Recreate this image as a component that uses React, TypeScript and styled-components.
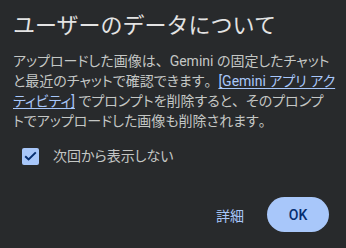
import React from "react";
import styled, { createGlobalStyle } from "styled-components";

const Global = createGlobalStyle`
  html, body { margin: 0; padding: 0; background: #282a2c; }
  body { width: 346px; height: 248px; overflow: hidden; }
`;

const font = `Roboto, "Noto Sans CJK JP", "Noto Sans", sans-serif`;

const Dialog = styled.div`
  box-sizing: border-box;
  width: 346px;
  height: 248px;
  background: #282a2c;
  padding: 12px 17px 0 13px;
  font-family: ${font};
  font-feature-settings: "palt";
  display: flex;
  flex-direction: column;
`;

const Title = styled.h1`
  margin: 0;
  font-size: 22px;
  font-weight: 400;
  line-height: 28px;
  color: #e3e3e3;
  font-feature-settings: normal;
`;

const Body = styled.p`
  margin: 11px 0 0;
  font-size: 14px;
  line-height: 20px;
  color: #c4c7c5;
  white-space: nowrap;
`;

const Punct = styled.span`
  font-feature-settings: normal;
`;

const Link = styled.a`
  color: #a8c7fa;
  text-decoration: underline;
  text-underline-offset: 2px;
`;

const CheckRow = styled.label`
  display: flex;
  align-items: center;
  gap: 14px;
  margin: 15px 0 0 9px;
  font-size: 14px;
  line-height: 20px;
  color: #c4c7c5;
`;

const Box = styled.span`
  width: 17px;
  height: 17px;
  border-radius: 2px;
  background: #a8c7fa;
  display: flex;
  align-items: center;
  justify-content: center;
`;

const Actions = styled.div`
  display: flex;
  justify-content: flex-end;
  align-items: center;
  gap: 23px;
  margin-top: 31px;
`;

const TextButton = styled.button`
  border: none;
  background: none;
  padding: 0;
  font-family: ${font};
  font-size: 14px;
  color: #a8c7fa;
  cursor: pointer;
`;

const FilledButton = styled.button`
  border: none;
  width: 62px;
  height: 35px;
  border-radius: 18px;
  background: #a8c7fa;
  color: #062e6f;
  font-family: ${font};
  font-size: 14px;
  font-weight: 500;
  cursor: pointer;
`;

export default function App() {
  return (
    <>
      <Global />
      <Dialog>
        <Title>ユーザーのデータについて</Title>
        <Body>
          アップロードした画像は<Punct>、</Punct>Gemini の固定したチャット
          <br />
          と最近のチャットで確認できます<Punct>。</Punct>
          <Link>
            [Gemini アプリ アク
            <br />
            ティビティ]
          </Link>{" "}
          でプロンプトを削除すると<Punct>、</Punct>そのプロンプ
          <br />
          トでアップロードした画像も削除されます<Punct>。</Punct>
        </Body>
        <CheckRow>
          <Box>
            <svg width="13" height="10" viewBox="0 0 13 10">
              <path d="M1.2 5.2 L4.6 8.4 L11.8 1.4" fill="none" stroke="#062e6f" strokeWidth="2" />
            </svg>
          </Box>
          次回から表示しない
        </CheckRow>
        <Actions>
          <TextButton>詳細</TextButton>
          <FilledButton>OK</FilledButton>
        </Actions>
      </Dialog>
    </>
  );
}
